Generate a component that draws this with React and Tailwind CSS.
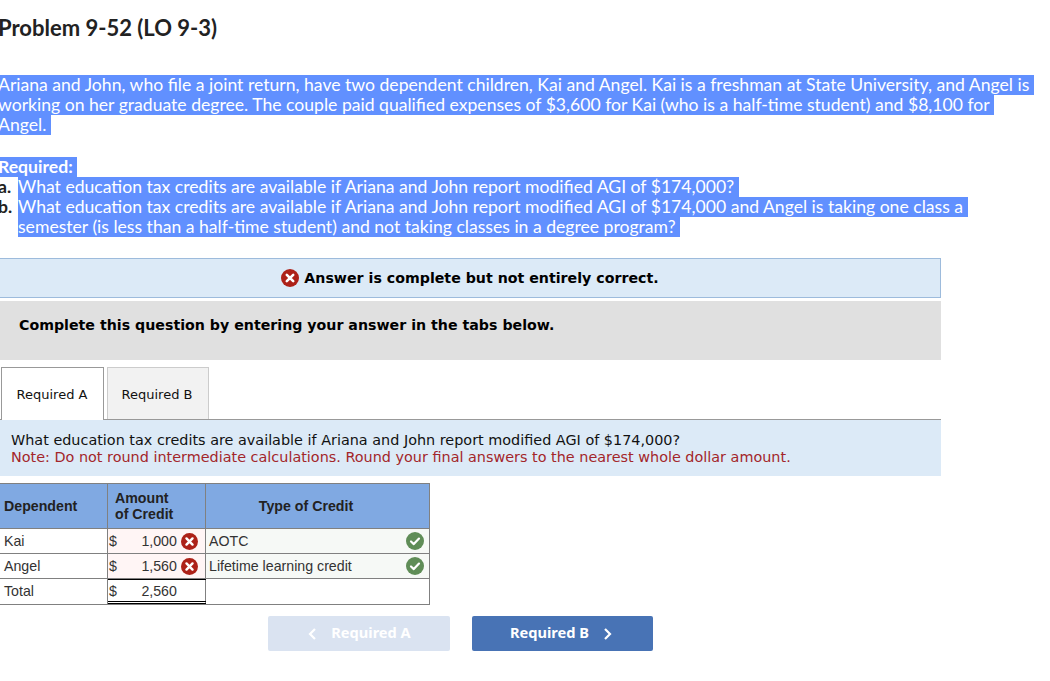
const Lines = ({ lines, className = "" }) => (
  <div className={className}>
    {lines.map((l) => (
      <div key={l} className="w-fit h-5 bg-[#6190ff] text-white whitespace-pre leading-[19px]">{l}</div>
    ))}
  </div>
);

const Cross = ({ size = 18 }) => (
  <svg width={size} height={size} viewBox="0 0 18 18" className="shrink-0">
    <circle cx="9" cy="9" r="9" fill="#ad2118" />
    <path d="M5.8 5.8l6.4 6.4M12.2 5.8l-6.4 6.4" stroke="#fff" strokeWidth="2.6" strokeLinecap="round" />
  </svg>
);

const Check = () => (
  <svg width="18" height="18" viewBox="0 0 18 18" className="shrink-0">
    <circle cx="9" cy="9" r="9" fill="#5f8d57" />
    <path d="M5 9.5l2.8 2.6L13 6.6" fill="none" stroke="#fff" strokeWidth="2.2" strokeLinecap="round" strokeLinejoin="round" />
  </svg>
);

const Row = ({ name, amt, wrong, type, bb = true }) => (
  <div className={`flex h-[25px] ${bb ? "border-b border-[#808080]" : ""} text-[14.2px] text-[#333]`}>
    <div className="w-[108px] pl-[4px] pt-px flex items-center border-r border-[#808080]">{name}</div>
    <div className={`w-[98px] flex items-center border-r border-[#808080] pl-[1px] ${wrong ? "bg-[#fff5f5]" : ""}`}>
      <span className={wrong ? "pt-px" : ""}>$</span>
      <span className={`w-[60px] text-right ${wrong ? "pt-px" : ""}`}>{amt}</span>
      {wrong && <span className="ml-[4px] pt-px"><Cross size={17} /></span>}
    </div>
    <div className={`flex-1 flex items-center justify-between pl-[3px] pr-[5px] ${type ? "bg-[#f6f9f6]" : ""}`}>
      <span className="pt-px">{type}</span>
      {type && <Check />}
    </div>
  </div>
);

export default function App() {
  return (
    <div className="w-[1050px] h-[681px] overflow-hidden bg-white relative font-['Liberation_Sans',sans-serif]">
      <div className="pt-[14px] -ml-[2px]">
        <h1 className="h-[26px] leading-[28px] text-[22px] font-bold text-[#222] font-['Lato',sans-serif]">Problem 9-52 (LO 9-3)</h1>
        <div className="mt-[35px] text-[17.6px] font-['Lato',sans-serif] text-[#222]">
          <Lines lines={[
            "Ariana and John, who file a joint return, have two dependent children, Kai and Angel. Kai is a freshman at State University, and Angel is ",
            "working on her graduate degree. The couple paid qualified expenses of $3,600 for Kai (who is a half-time student) and $8,100 for ",
            "Angel. ",
          ]} />
          <Lines className="mt-[22px] font-bold" lines={["Required: "]} />
          <div className="flex leading-[19px]">
            <span className="w-[20px] font-bold">a.</span>
            <Lines lines={["What education tax credits are available if Ariana and John report modified AGI of $174,000? "]} />
          </div>
          <div className="flex leading-[19px]">
            <span className="w-[20px] font-bold">b.</span>
            <Lines lines={[
              "What education tax credits are available if Ariana and John report modified AGI of $174,000 and Angel is taking one class a ",
              "semester (is less than a half-time student) and not taking classes in a degree program? ",
            ]} />
          </div>
        </div>
      </div>

      <div className="w-[941px] mt-[21px] font-['DejaVu_Sans',sans-serif]">
        <div className="h-10 bg-[#dceaf7] border-y border-r border-[#9dbbdc] flex items-center justify-center gap-[5px] text-[14.2px] font-bold text-black">
          <Cross />
          <span className="pt-px">Answer is complete but not entirely correct.</span>
        </div>
        <div className="mt-[3px] h-[59px] bg-[#e0e0e0] pl-[19px] pt-[14px] text-[14.2px] leading-5 font-bold text-black">
          Complete this question by entering your answer in the tabs below.
        </div>
        <div className="mt-[7px] h-[53px] flex items-end gap-[3px] pl-[1px] border-b border-[#999] text-[13px] text-[#111]">
          <div className="w-[103px] h-[53px] -mb-px pt-px pr-px bg-white border border-b-0 border-[#999] flex items-center justify-center">Required A</div>
          <div className="w-[102px] h-[52px] pr-[2px] pt-[2px] bg-[#f2f2f2] border border-b-0 border-[#ccc] flex items-center justify-center">Required B</div>
        </div>
        <div className="h-[56px] bg-[#dceaf7] pl-[11px] pt-[12px] text-[14.4px] leading-[17px] text-[#111]">
          <div>What education tax credits are available if Ariana and John report modified AGI of $174,000?</div>
          <div className="text-[#a3262a]">Note: Do not round intermediate calculations. Round your final answers to the nearest whole dollar amount.</div>
        </div>
      </div>

      <div className="mt-[7px] w-[430px] border-y border-r border-[#808080]">
        <div className="flex h-[45px] bg-[#80a9e2] border-b border-[#808080] text-[14.2px] font-bold text-[#222]">
          <div className="w-[108px] pl-[4px] pt-[2px] flex items-center border-r border-[#808080]">Dependent</div>
          <div className="w-[98px] pl-[7px] flex items-center border-r border-[#808080] leading-4">
            <div>Amount<br />of Credit</div>
          </div>
          <div className="flex-1 flex items-center justify-center pr-[23px] pt-[2px]">Type of Credit</div>
        </div>
        <Row name="Kai" amt="1,000" wrong type="AOTC" />
        <Row name="Angel" amt="1,560" wrong type="Lifetime learning credit" />
        <div className="relative">
          <Row name="Total" amt="2,560" bb={false} />
          <div className="absolute left-[108px] w-[98px] top-0 h-full border-t border-b-[3px] border-double border-black pointer-events-none" />
        </div>
      </div>

      <div className="mt-[11px] flex gap-[22px] pl-[268px] text-[14.6px] font-bold font-['Noto_Sans',sans-serif] text-white">
        <div className="w-[182px] h-[35px] rounded-[2px] bg-[#dae3f1] flex items-center justify-center gap-[14px]">
          <svg width="10" height="14" viewBox="0 0 10 14"><path d="M8 2L3 7l5 5" fill="none" stroke="#fff" strokeWidth="2.2" /></svg>
          <span className="pb-[2px]">Required A</span>
        </div>
        <div className="w-[181px] h-[35px] pr-[2px] rounded-[2px] bg-[#4873b5] flex items-center justify-center gap-[14px]">
          <span className="pb-[2px]">Required B</span>
          <svg width="10" height="14" viewBox="0 0 10 14"><path d="M2 2l5 5-5 5" fill="none" stroke="#fff" strokeWidth="2.2" /></svg>
        </div>
      </div>
    </div>
  );
}
